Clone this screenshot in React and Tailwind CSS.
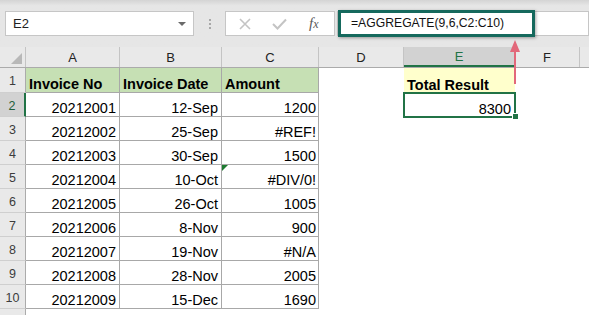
const cols = [
  { key: "A", w: "w-[94px]" },
  { key: "B", w: "w-[102px]" },
  { key: "C", w: "w-[97px]" },
  { key: "D", w: "w-[85px]" },
  { key: "E", w: "w-[111px]" },
  { key: "F", w: "w-[65px]" },
  { key: "", w: "w-[15px]" },
];

const data = [
  ["20212001", "12-Sep", "1200"],
  ["20212002", "25-Sep", "#REF!"],
  ["20212003", "30-Sep", "1500"],
  ["20212004", "10-Oct", "#DIV/0!"],
  ["20212005", "26-Oct", "1005"],
  ["20212006", "8-Nov", "900"],
  ["20212007", "19-Nov", "#N/A"],
  ["20212008", "28-Nov", "2005"],
  ["20212009", "15-Dec", "1690"],
];

const tableCell = "h-full border-r border-b border-[#a8a8a8] flex items-end";

const RowHeader = ({ n, active }) => (
  <div
    className={`h-full w-[26px] shrink-0 flex items-center justify-center text-[12.5px] ${
      active
        ? "bg-[#d2d2d2] border-r-2 border-r-[#217346] text-[#1d5e3a]"
        : "bg-[#e9e9e9] border-r border-r-[#ababab] text-[#3c3c3c]"
    } border-b border-b-[#cfcfcf] pt-[3px]`}
  >
    {n}
  </div>
);

const App = () => {
  return (
    <div className="relative w-[589px] h-[315px] overflow-hidden bg-white font-['Liberation_Sans',Arial,sans-serif] text-black">
      {/* FORMULA BAR */}
      <div className="h-[47px] bg-[#e6e6e6] bg-gradient-to-b from-[#d4d4d4] via-[#e6e6e6] via-[12%] to-[#e6e6e6] pt-[11px]">
        <div className="flex h-[25px]">
          <div className="ml-[5px] w-[189px] h-full bg-white border border-[#c6c6c6] flex items-center justify-between pl-[7px] pr-[7px]">
            <span className="text-[13px] text-[#222]">E2</span>
            <span className="w-0 h-0 border-l-[4px] border-r-[4px] border-t-[4px] border-l-transparent border-r-transparent border-t-[#6a6a6a]" />
          </div>
          <div className="w-[31px] flex flex-col items-center justify-center gap-[2px]">
            <span className="w-[2px] h-[2px] bg-[#a8a8a8]" />
            <span className="w-[2px] h-[2px] bg-[#a8a8a8]" />
            <span className="w-[2px] h-[2px] bg-[#a8a8a8]" />
          </div>
          <div className="w-[110px] h-full bg-white border border-[#c6c6c6] flex items-center">
            <svg width="12" height="12" viewBox="0 0 12 12" className="ml-[13px]">
              <path d="M1 1 L11 11 M11 1 L1 11" stroke="#c4c4c4" strokeWidth="1.6" />
            </svg>
            <svg width="15" height="12" viewBox="0 0 15 12" className="ml-[21px]">
              <path d="M1 6 L5.5 10.5 L14 1.5" stroke="#c4c4c4" strokeWidth="2" fill="none" />
            </svg>
            <span className="ml-[22px] font-['Liberation_Serif',serif] italic text-[15px] text-[#5a5a5a] leading-none">
              f<span className="text-[12px]">x</span>
            </span>
          </div>
          <div className="ml-[2px] flex-1 h-full bg-white border border-[#c6c6c6]" />
        </div>
      </div>

      {/* COLUMN HEADERS */}
      <div className="flex h-[21px] bg-[#e9e9e9] border-b border-[#ababab]">
        <div className="w-[26px] shrink-0 h-full border-r border-[#c4c4c4] flex items-end justify-end pr-[3px] pb-[3px]">
          <span className="w-0 h-0 border-b-[11px] border-l-[11px] border-b-[#b8b8b8] border-l-transparent" />
        </div>
        {cols.map((c, i) => (
          <div
            key={i}
            className={`${c.w} shrink-0 h-full flex items-center justify-center text-[13px] pt-[2px] ${
              c.key === "E"
                ? "bg-[#d2d2d2] border-b-2 border-b-[#217346] text-[#217346] border-r border-r-[#c4c4c4]"
                : "text-[#222] border-r border-r-[#c4c4c4]"
            }`}
          >
            {c.key}
          </div>
        ))}
      </div>

      {/* ROW 1 */}
      <div className="flex h-[25px]">
        <RowHeader n={1} />
        <div className={`w-[94px] ${tableCell} bg-[#c6e0b4] pl-[3px] font-bold text-[14.5px] leading-[16px]`}>Invoice No</div>
        <div className={`w-[102px] ${tableCell} bg-[#c6e0b4] pl-[3px] font-bold text-[14.5px] leading-[16px]`}>Invoice Date</div>
        <div className={`w-[97px] ${tableCell} bg-[#c6e0b4] pl-[3px] font-bold text-[14.5px] leading-[16px]`}>Amount</div>
        <div className="w-[85px] h-full" />
        <div className="w-[111px] h-full bg-[#ffffcc] flex items-end pl-[3px] font-bold text-[14.5px] leading-[16px]">Total Result</div>
        <div className="w-[65px] h-full" />
      </div>

      {/* DATA ROWS */}
      {data.map((r, i) => (
        <div key={i} className="flex h-[24px]">
          <RowHeader n={i + 2} active={i === 0} />
          <div className={`w-[94px] ${tableCell} justify-end pr-[3px] text-[14.5px] leading-[16px]`}>{r[0]}</div>
          <div className={`w-[102px] ${tableCell} justify-end pr-[3px] text-[14.5px] leading-[16px]`}>{r[1]}</div>
          <div className={`relative w-[97px] ${tableCell} justify-end pr-[2px] text-[14.5px] leading-[16px]`}>
            {r[2]}
            {i === 3 && (
              <span className="absolute left-0 top-0 w-0 h-0 border-t-[6px] border-r-[6px] border-t-[#1e7b30] border-r-transparent" />
            )}
          </div>
          <div className="w-[85px] h-full" />
          <div className="relative w-[111px] h-full flex items-end justify-end pr-[4px] text-[14.5px] leading-[16px]">
            {i === 0 && (
              <>
                8300
                <span className="absolute left-[-1px] top-[-1px] w-[113px] h-[26px] border-2 border-[#217346]" />
                <span className="absolute left-[108px] top-[20px] w-[7px] h-[7px] bg-[#217346] border border-white" />
              </>
            )}
          </div>
          <div className="w-[65px] h-full" />
        </div>
      ))}

      {/* ROW 11 */}
      <div className="flex h-[10px]">
        <div className="w-[26px] h-full bg-[#e9e9e9] border-r border-[#ababab]" />
      </div>

      {/* FORMULA HIGHLIGHT */}
      <div className="absolute left-[338px] top-[10px] w-[197px] h-[27px] border-[3px] border-[#15695d] bg-white shadow-[1px_1px_3px_rgba(0,0,0,0.35)] flex items-center pl-[10px] text-[12.2px] text-[#111]">
        =AGGREGATE(9,6,C2:C10)
      </div>

      {/* ARROW */}
      <svg className="absolute left-[508px] top-[38px]" width="14" height="48" viewBox="0 0 14 48">
        <path d="M7 12 L7 46" stroke="#e2687a" strokeWidth="2" />
        <polygon points="7,2 2,14 12,14" fill="#e2687a" />
      </svg>
    </div>
  );
};

export default App;
